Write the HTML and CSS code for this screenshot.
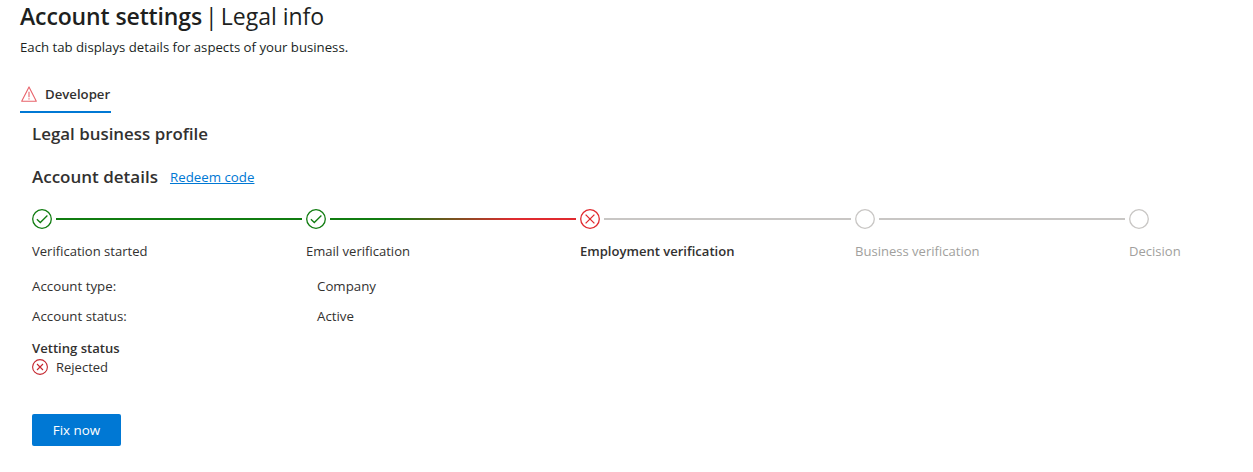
FILE: index.html
```html
<!DOCTYPE html>
<html lang="en">
<head>
<meta charset="utf-8">
<title>Account settings | Legal info</title>
<link rel="stylesheet" href="styles.css">
</head>
<body>
<header class="page-head">
  <h1 class="title"><span class="title-strong">Account settings</span><span class="title-sep">|</span>Legal info</h1>
  <p class="subtitle">Each tab displays details for aspects of your business.</p>
</header>
<nav class="tabs">
  <div class="tab">
    <svg class="tab-icon" viewBox="0 0 16 16" width="16" height="16" fill="none" stroke="#e8636b" stroke-width="1.1"><path d="M8 .9 .7 15.2h14.6z" stroke-linejoin="round"/><path d="M8 5.8v5.4M8 12.2v1.4"/></svg>
    <span>Developer</span>
  </div>
</nav>
<main class="content">
  <h2 class="profile">Legal business profile</h2>
  <div class="details-head">
    <h3 class="details-title">Account details</h3>
    <a class="link" href="#">Redeem code</a>
  </div>
  <ol class="stepper">
    <li class="step">
      <div class="track">
        <svg class="node" viewBox="0 0 20 20" width="20" height="20" fill="none" stroke="#107c10" stroke-width="1.3"><circle cx="10" cy="10" r="9.3"/><path d="M4.9 10.2 8.3 13.5 15.4 6.5"/></svg>
        <span class="line line-green"></span>
      </div>
      <span class="step-label">Verification started</span>
    </li>
    <li class="step">
      <div class="track">
        <svg class="node" viewBox="0 0 20 20" width="20" height="20" fill="none" stroke="#107c10" stroke-width="1.3"><circle cx="10" cy="10" r="9.3"/><path d="M4.9 10.2 8.3 13.5 15.4 6.5"/></svg>
        <span class="line line-mixed"></span>
      </div>
      <span class="step-label">Email verification</span>
    </li>
    <li class="step step-wide">
      <div class="track">
        <svg class="node" viewBox="0 0 20 20" width="20" height="20" fill="none" stroke="#e02a2f" stroke-width="1.3"><circle cx="10" cy="10" r="9.3"/><path d="M5.6 5.6 14.4 14.4M14.4 5.6 5.6 14.4"/></svg>
        <span class="line line-grey"></span>
      </div>
      <span class="step-label step-current">Employment verification</span>
    </li>
    <li class="step">
      <div class="track">
        <svg class="node" viewBox="0 0 20 20" width="20" height="20" fill="none" stroke="#c8c6c4" stroke-width="1.3"><circle cx="10" cy="10" r="9.3"/></svg>
        <span class="line line-grey"></span>
      </div>
      <span class="step-label step-future">Business verification</span>
    </li>
    <li class="step step-last">
      <div class="track">
        <svg class="node" viewBox="0 0 20 20" width="20" height="20" fill="none" stroke="#c8c6c4" stroke-width="1.3"><circle cx="10" cy="10" r="9.3"/></svg>
      </div>
      <span class="step-label step-future">Decision</span>
    </li>
  </ol>
  <dl class="facts">
    <div class="fact"><dt>Account type:</dt><dd>Company</dd></div>
    <div class="fact"><dt>Account status:</dt><dd>Active</dd></div>
  </dl>
  <div class="vetting">
    <div class="vetting-title">Vetting status</div>
    <div class="vetting-value">
      <svg viewBox="0 0 16 16" width="16" height="16" fill="none" stroke="#c4262e" stroke-width="1.1"><circle cx="8" cy="8" r="7.4"/><path d="M5 5 11 11M11 5 5 11"/></svg>
      <span>Rejected</span>
    </div>
  </div>
  <button class="primary" type="button">Fix now</button>
</main>
</body>
</html>
```
FILE: styles.css
```css
* { box-sizing: border-box; }
html, body { margin: 0; padding: 0; }
body {
  width: 1253px;
  height: 472px;
  overflow: hidden;
  background: #fff;
  color: #323130;
  font-family: "Open Sans", "Noto Sans", sans-serif;
  font-size: 13px;
  line-height: 18px;
}
.page-head { padding: 0 20px; }
.title {
  margin: 0;
  font-size: 23px;
  line-height: 32px;
  font-weight: 400;
  color: #201f1e;
}
.title-strong { font-weight: 600; letter-spacing: -0.12px; }
.title-sep { margin: 0 3px 0 3px; font-weight: 400; }
.subtitle { margin: 6px 0 0; font-size: 13.2px; color: #201f1e; line-height: 18px; }
.tabs { display: flex; padding: 0 20px; margin-top: 20px; }
.tab {
  display: flex;
  align-items: center;
  gap: 8px;
  height: 37px;
  width: 91px;
  border-bottom: 2px solid #0078d4;
  font-weight: 600;
  font-size: 13.2px;
}
.tab-icon { flex: none; margin-left: 1px; }
.content { padding: 0 32px; }
.profile { margin: 10px 0 0; font-size: 16.9px; line-height: 22px; font-weight: 600; }
.details-head { display: flex; align-items: center; gap: 12px; margin-top: 21px; }
.details-title { margin: 0; font-size: 17px; line-height: 22px; font-weight: 600; }
.link { color: #0078d4; font-size: 13.3px; }
.stepper { list-style: none; margin: 21px 0 0; padding: 0; display: flex; }
.step { flex: none; width: 274px; display: flex; flex-direction: column; gap: 13px; }
.step-wide { width: 275px; }
.step-last { width: 60px; }
.track { display: flex; align-items: center; gap: 4px; height: 20px; padding-right: 4px; }
.node { flex: none; }
.line { display: block; height: 2px; flex: 1; }
.line-green { background: #107c10; }
.line-mixed { background: linear-gradient(90deg, #107c10 25%, #e02a2f 75%); }
.line-grey { background: #c8c6c4; }
.step-label { font-size: 13.05px; white-space: nowrap; }
.step-current { font-weight: 600; }
.step-future { color: #a19f9d; }
.facts { margin: 17px 0 0; font-size: 13.3px; }
.fact { display: flex; height: 18px; margin-bottom: 12px; }
.fact dt { width: 285px; }
.fact dd { margin: 0; }
.vetting { margin-top: 14px; }
.vetting-title { font-weight: 600; line-height: 18px; font-size: 13.1px; }
.vetting-value { display: flex; align-items: center; gap: 8px; height: 20px; }
.primary {
  display: block;
  margin-top: 37px;
  width: 89px;
  height: 32px;
  border: 0;
  border-radius: 2px;
  background: #0078d4;
  color: #fff;
  font: 500 13.4px "Open Sans", "Noto Sans", sans-serif;
}
```
